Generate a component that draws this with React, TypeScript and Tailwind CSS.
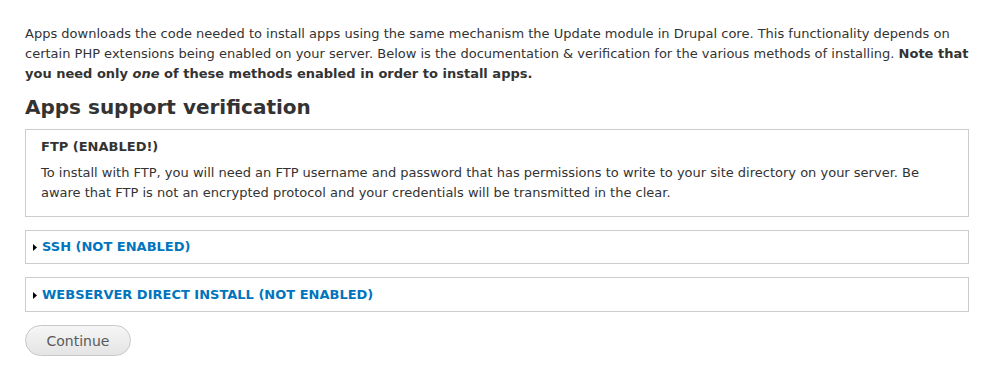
export default function App() {
  const font = { fontFamily: '"DejaVu Sans", Verdana, sans-serif' };
  return (
    <div className="bg-white w-[987px] h-[375px] text-[#333] text-[13px] leading-[20px] pl-[25px] pr-[12px] pt-[24px]" style={font}>
      <p>
        Apps downloads the code needed to install apps using the same mechanism the Update module in Drupal core. This functionality depends on certain PHP extensions being enabled on your server. Below is the documentation &amp; verification for the various methods of installing.{" "}
        <strong>
          Note that you need only <em>one</em> of these methods enabled in order to install apps.
        </strong>
      </p>
      <h2 className="text-[20px] leading-[26px] font-bold mt-[10px] mb-[9px]">Apps support verification</h2>
      <div className="w-[944px] flex flex-col gap-[13px]">
        <div className="border border-[#ccc] px-[15px] pt-[7px] pb-[13px]">
          <div className="font-bold uppercase">FTP (enabled!)</div>
          <p className="mt-[6px]">
            To install with FTP, you will need an FTP username and password that has permissions to write to your site directory on your server. Be aware that FTP is not an encrypted protocol and your credentials will be transmitted in the clear.
          </p>
        </div>
        <div className="border border-[#ccc] pl-[7px] pr-[15px] pt-[6px] pb-[6px] flex items-center">
          <svg width="4" height="7" viewBox="0 0 4 7" className="mr-[5px]"><path d="M0 0 L4 3.5 L0 7 Z" fill="#000" /></svg>
          <span className="font-bold uppercase text-[#0074bd]">SSH (not enabled)</span>
        </div>
        <div className="border border-[#ccc] pl-[7px] pr-[15px] pt-[7px] pb-[6px] flex items-center">
          <svg width="4" height="7" viewBox="0 0 4 7" className="mr-[5px]"><path d="M0 0 L4 3.5 L0 7 Z" fill="#000" /></svg>
          <span className="font-bold uppercase text-[#0074bd]">Webserver direct install (not enabled)</span>
        </div>
      </div>
      <button
        className="mt-[13px] w-[106px] h-[31px] rounded-full border border-[#c8c8c8] bg-gradient-to-b from-[#f6f6f6] to-[#e4e4e4] text-[#5a5a5a] text-[14px] flex items-center justify-center"
        style={font}
      >
        Continue
      </button>
    </div>
  );
}
